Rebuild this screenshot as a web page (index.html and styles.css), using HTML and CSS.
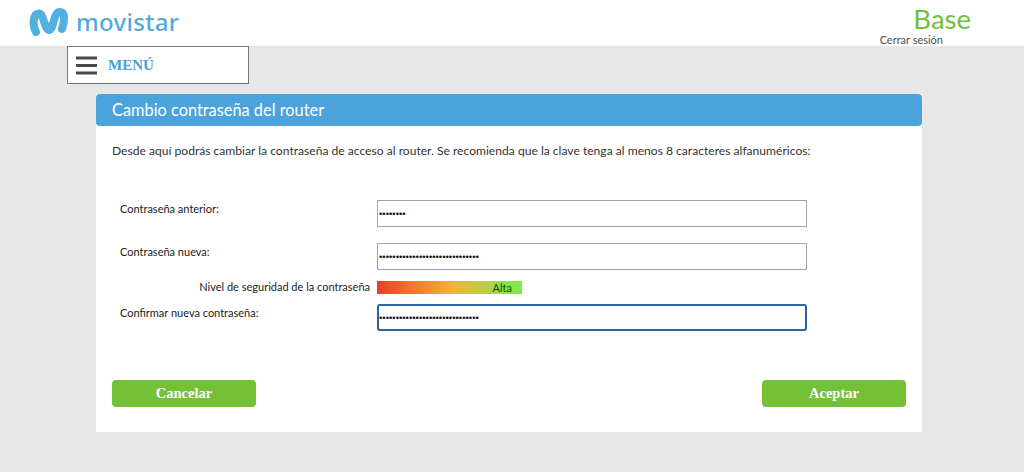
FILE: index.html
```html
<!DOCTYPE html>
<html lang="es">
<head>
<meta charset="utf-8">
<title>Cambio contraseña del router</title>
<link rel="stylesheet" href="styles.css">
</head>
<body>
<header class="topbar">
  <div class="brand">
    <svg class="brand-mark" viewBox="0 0 40 30" width="40" height="30" aria-hidden="true">
      <path d="M8 25 C4 18 5 6.500 11 6.500 C16 6.500 16 22 21 23 C26 23 25 5 32 5 C38 5 36 16 34 22" fill="none" stroke="#51b0e0" stroke-width="8" stroke-linecap="round"/>
    </svg>
    <span class="brand-name">movistar</span>
  </div>
  <div class="account">
    <span class="plan">Base</span>
    <a class="logout">Cerrar sesión</a>
  </div>
</header>
<main class="page">
  <nav class="menu">
    <svg class="menu-icon" viewBox="0 0 21 19" width="21" height="19" aria-hidden="true">
      <path d="M0 2h21M0 9.500h21M0 17h21" stroke="#4a4a4d" stroke-width="3"/>
    </svg>
    <span class="menu-label">MENÚ</span>
  </nav>
  <section class="panel">
    <h1 class="panel-title">Cambio contraseña del router</h1>
    <div class="panel-body">
      <p class="intro">Desde aquí podrás cambiar la contraseña de acceso al router. Se recomienda que la clave tenga al menos 8 caracteres alfanuméricos:</p>
      <form class="form">
        <div class="row row-first">
          <label class="label">Contraseña anterior:</label>
          <input class="field" type="password" value="abcdefgh">
        </div>
        <div class="row row-second">
          <label class="label">Contraseña nueva:</label>
          <input class="field" type="password" value="abcdefghijklmnopqrstuvwxyz1234">
        </div>
        <div class="strength">
          <span class="strength-label">Nivel de seguridad de la contraseña</span>
          <div class="strength-bar"><span>Alta</span></div>
        </div>
        <div class="row row-third">
          <label class="label">Confirmar nueva contraseña:</label>
          <input class="field field-focus" type="password" value="abcdefghijklmnopqrstuvwxyz1234">
        </div>
        <div class="actions">
          <button class="btn" type="button">Cancelar</button>
          <button class="btn" type="button">Aceptar</button>
        </div>
      </form>
    </div>
  </section>
</main>
</body>
</html>
```
FILE: styles.css
```css
* { box-sizing: border-box; }
html, body { margin: 0; height: 100%; }
body {
  background: #e7e7e7;
  font-family: Lato, "Noto Sans", "Liberation Sans", sans-serif;
  color: #2d2d2f;
  overflow: hidden;
}
.topbar {
  height: 46px;
  background: #fff;
  display: flex;
  justify-content: space-between;
  padding-left: 28px;
  padding-right: 53px;
}
.brand { display: flex; align-items: flex-start; gap: 8px; padding-top: 7px; }
.brand-mark { display: block; }
.brand-name {
  font-family: "Noto Sans", sans-serif;
  font-weight: 500;
  font-size: 24px;
  line-height: 30px;
  color: #55a9d6;
  letter-spacing: 0.3px;
}
.account { display: flex; flex-direction: column; align-items: flex-end; width: 90px; }
.plan {
  font-size: 27.500px;
  line-height: 28px;
  margin-top: 5px;
  color: #72c03c;
}
.logout {
  font-size: 11px;
  line-height: 12px;
  margin-top: 1px;
  margin-right: 28px;
  white-space: nowrap;
  color: #4f5054;
}
.page { padding-left: 96px; width: 922px; }
.menu {
  width: 182px;
  height: 38px;
  margin-left: -29px;
  background: #fff;
  border: 1px solid #77777a;
  display: flex;
  align-items: center;
  gap: 11px;
  padding-left: 8px;
}
.menu-icon { display: block; }
.menu-label {
  font-family: "Liberation Serif", serif;
  font-weight: bold;
  font-size: 15px;
  color: #4a9fd4;
}
.panel { margin-top: 10px; background: #fff; height: 338px; }
.panel-title {
  margin: 0;
  height: 32px;
  padding-left: 16px;
  background: #4ca3db;
  border-radius: 4px;
  color: #fff;
  font-weight: 400;
  font-size: 16.350px;
  line-height: 32px;
}
.panel-body { padding: 0 16px; }
.intro {
  margin: 0;
  padding-top: 16px;
  font-size: 12.100px;
  line-height: 18px;
  color: #333;
  white-space: nowrap;
}
.form { display: flex; flex-direction: column; }
.row { display: grid; grid-template-columns: 257px 430px; align-items: start; padding-left: 8px; }
.row-first { margin-top: 40px; }
.row-second { margin-top: 16px; }
.row-third { margin-top: 10px; }
.label { font-size: 11px; line-height: 14px; color: #222; margin-top: 2px; }
.field {
  width: 430px;
  height: 27px;
  border: 1px solid #a3a3a3;
  background: #fff;
  padding: 0 0 0 1px;
  font-size: 9.500px;
  font-family: "Liberation Sans", sans-serif;
  color: #111;
  outline: none;
}
.field-focus {
  border: 2px solid #2f62a8;
  border-radius: 3px;
  padding-left: 0;
}
.strength {
  display: flex;
  align-items: center;
  height: 14px;
  margin-top: 10px;
}
.strength-label {
  width: 265px;
  text-align: right;
  font-size: 11px;
  line-height: 14px;
  color: #222;
  padding-right: 7px;
  flex: none;
}
.strength-bar {
  width: 145px;
  height: 13px;
  background: linear-gradient(90deg, #ea3f26 0%, #ee7a2f 25%, #f0b23a 52%, #b3cf48 78%, #7fe84c 90%, #7fe84c 100%);
  font-size: 11px;
  line-height: 13px;
  color: #26401a;
  text-align: right;
  padding-right: 10px;
}
.actions {
  display: flex;
  justify-content: space-between;
  margin-top: 49px;
}
.btn {
  width: 144px;
  height: 27px;
  background: #74c138;
  color: #fff;
  border: 0;
  border-radius: 4px;
  font-family: "Liberation Serif", serif;
  font-weight: bold;
  font-size: 14.500px;
  padding: 0;
}
```
